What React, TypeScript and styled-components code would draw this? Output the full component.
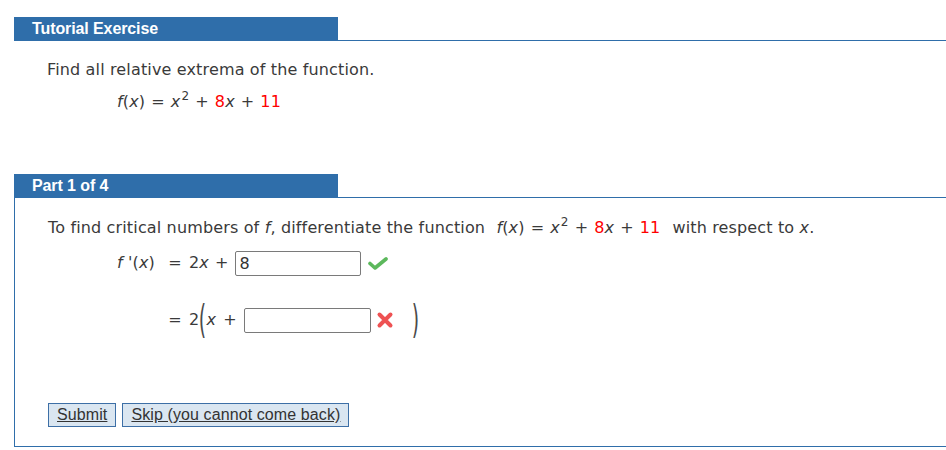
import React from "react";
import styled, { createGlobalStyle } from "styled-components";

const Global = createGlobalStyle`
  html, body { margin: 0; padding: 0; background: #fff; overflow: hidden; }
  body { font-family: "DejaVu Sans", Verdana, sans-serif; color: #3a3a3a; }
`;

const BLUE = "#2f6eaa";

const Page = styled.div`
  padding: 17px 0 0 14px;
  width: 932px;
`;

const Section = styled.section<{ $gap?: number }>`
  margin-top: ${(p) => p.$gap ?? 0}px;
`;

const HeaderBar = styled.div`
  display: flex;
  border-bottom: 1px solid ${BLUE};
  height: 23px;
`;

const Tab = styled.div`
  width: 324px;
  height: 24px;
  background: ${BLUE};
  color: #fff;
  font-family: "Liberation Sans", Arial, sans-serif;
  font-weight: bold;
  font-size: 16px;
  line-height: 24px;
  padding-left: 18px;
  box-sizing: border-box;
  letter-spacing: -0.1px;
`;

const Body = styled.div<{ $boxed?: boolean }>`
  padding: ${(p) => (p.$boxed ? "20px 0 19px 33px" : "19px 0 0 33px")};
  border-left: ${(p) => (p.$boxed ? `1px solid ${BLUE}` : "none")};
  border-bottom: ${(p) => (p.$boxed ? `1px solid ${BLUE}` : "none")};
  font-size: 16px;
  line-height: 20px;
  letter-spacing: 0.15px;
`;

const Para = styled.p`
  margin: 0;
  white-space: nowrap;
`;

const MathLine = styled.div`
  margin: 12px 0 0 70px;
  white-space: nowrap;
`;

const I = styled.i`
  font-style: italic;
`;

const Red = styled.span`
  color: #f00;
`;

const Sup = styled.sup`
  font-size: 12px;
  vertical-align: 7px;
  line-height: 0;
  margin-left: 1px;
`;

const Sp = styled.span<{ $w: number }>`
  display: inline-block;
  width: ${(p) => p.$w}px;
`;

const Grid = styled.div`
  display: grid;
  grid-template-columns: 48px 20px auto;
  row-gap: 13px;
  margin: 10px 0 0 69px;
  align-items: center;
`;

const Label = styled.div`
  height: 30px;
  display: flex;
  align-items: center;
  white-space: nowrap;
`;

const Eq = styled.div`
  height: 30px;
  display: flex;
  align-items: center;
  justify-content: center;
`;

const Expr = styled.div<{ $h: number }>`
  height: ${(p) => p.$h}px;
  display: flex;
  align-items: center;
  padding-left: 4px;
  white-space: pre;
`;

const Input = styled.div<{ $w: number }>`
  width: ${(p) => p.$w}px;
  height: 25px;
  box-sizing: border-box;
  border: 1px solid #7a7a7a;
  border-radius: 2px;
  font-size: 16px;
  line-height: 23px;
  padding-left: 4px;
  color: #333;
`;

const Paren = styled.span`
  display: inline-block;
  font-size: 18px;
  font-weight: normal;
  transform: scale(1.05, 2.2);
  color: #4a4a4a;
  line-height: 1;
`;

const Mark = styled.svg`
  display: block;
  flex: none;
`;

const Buttons = styled.div`
  display: flex;
  gap: 6px;
  margin-top: 54px;
`;

const Button = styled.button`
  font-family: "Liberation Sans", Arial, sans-serif;
  font-size: 16px;
  height: 24px;
  padding: 0 8px;
  background: #dae6f1;
  border: 1px solid #3d6fa6;
  color: #333;
  text-decoration: underline;
  line-height: 22px;
  letter-spacing: 0.1px;
  cursor: pointer;
`;

const Check = () => (
  <Mark width="22" height="14" viewBox="0 0 22 14">
    <path d="M3 7.5 L8 12 L19 3" fill="none" stroke="#5cb85c" strokeWidth="3.6" strokeLinecap="round" strokeLinejoin="round" />
  </Mark>
);

const Cross = () => (
  <Mark width="18" height="18" viewBox="0 0 18 18">
    <path d="M3.5 3.5 L14.5 14.5 M14.5 3.5 L3.5 14.5" fill="none" stroke="#ee5253" strokeWidth="4" strokeLinecap="round" />
  </Mark>
);

const Fx = () => (
  <>
    <I>f</I>(<I>x</I>)<Sp $w={6} />=<Sp $w={6} />
    <I>x</I>
    <Sup>2</Sup>
    <Sp $w={6} />+<Sp $w={6} />
    <Red>8</Red>
    <I>x</I>
    <Sp $w={6} />+<Sp $w={6} />
    <Red>11</Red>
  </>
);

export default function App() {
  return (
    <>
      <Global />
      <Page>
        <Section>
          <HeaderBar>
            <Tab>Tutorial Exercise</Tab>
          </HeaderBar>
          <Body>
            <Para>Find all relative extrema of the function.</Para>
            <MathLine>
              <Fx />
            </MathLine>
          </Body>
        </Section>
        <Section $gap={62}>
          <HeaderBar>
            <Tab>Part 1 of 4</Tab>
          </HeaderBar>
          <Body $boxed>
            <Para>
              To find critical numbers of <I>f</I>, differentiate the function <Sp $w={6} />
              <Fx />
              <Sp $w={12} />
              with respect to <I>x</I>.
            </Para>
            <Grid>
              <Label>
                <I>f</I>&nbsp;'(<I>x</I>)
              </Label>
              <Eq>=</Eq>
              <Expr $h={30}>
                2<I>x</I>
                <Sp $w={6} />+<Sp $w={6} />
                <Input $w={126}>8</Input>
                <Sp $w={6} />
                <Check />
              </Expr>
              <Label />
              <Eq>=</Eq>
              <Expr $h={58}>
                2<Paren>(</Paren>
                <I>x</I>
                <Sp $w={7} />+<Sp $w={7} />
                <Input $w={127}>{""}</Input>
                <Sp $w={5} />
                <Cross />
                <Sp $w={18} />
                <Paren>)</Paren>
              </Expr>
            </Grid>
            <Buttons>
              <Button>Submit</Button>
              <Button>Skip (you cannot come back)</Button>
            </Buttons>
          </Body>
        </Section>
      </Page>
    </>
  );
}
